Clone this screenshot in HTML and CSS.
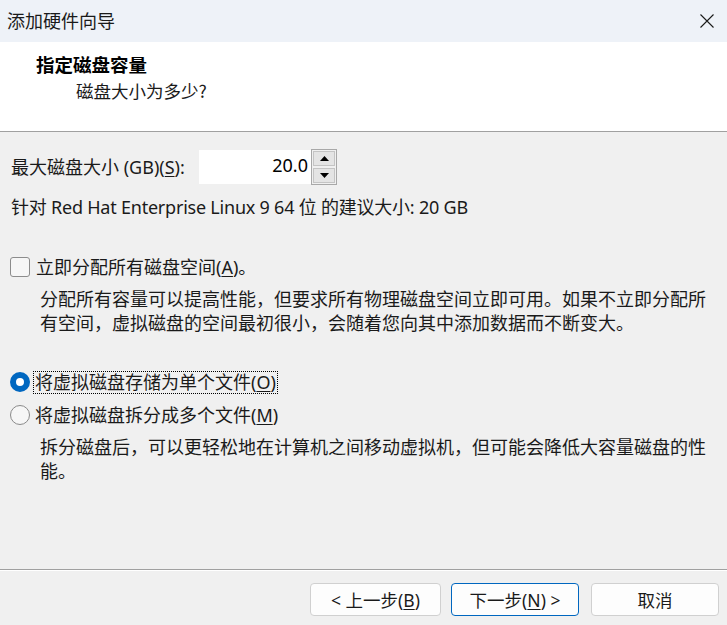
FILE: index.html
```html
<!DOCTYPE html>
<html lang="zh-CN">
<head>
<meta charset="utf-8">
<title>添加硬件向导</title>
<link rel="stylesheet" href="styles.css">
</head>
<body>
<div class="window">
  <div class="titlebar">
    <span class="title">添加硬件向导</span>
    <svg class="close" width="14" height="14" viewBox="0 0 14 14"><path d="M0.5 0.5 L13.5 13.5 M13.5 0.5 L0.5 13.5" stroke="#1a1a1a" stroke-width="1.1" fill="none"/></svg>
  </div>
  <div class="header">
    <div class="h-title">指定磁盘容量</div>
    <div class="h-sub">磁盘大小为多少?</div>
  </div>
  <div class="content">
    <div class="size-row">
      <span class="lbl">最大磁盘大小 (GB)(<u>S</u>):</span>
      <div class="spin">
        <div class="spin-input">20.0</div>
        <div class="spin-btns">
          <div class="spin-btn"><svg width="9" height="5" viewBox="0 0 9 5"><path d="M4.5 0 L9 5 L0 5 Z" fill="#000"/></svg></div>
          <div class="spin-btn"><svg width="9" height="5" viewBox="0 0 9 5"><path d="M0 0 L9 0 L4.5 5 Z" fill="#000"/></svg></div>
        </div>
      </div>
    </div>
    <div class="recommend">针对 Red Hat Enterprise Linux 9 64 位 的建议大小: 20 GB</div>

    <div class="option check-opt">
      <span class="checkbox"></span>
      <span class="opt-label">立即分配所有磁盘空间(<u>A</u>)。</span>
    </div>
    <p class="desc">分配所有容量可以提高性能，但要求所有物理磁盘空间立即可用。如果不立即分配所有空间，虚拟磁盘的空间最初很小，会随着您向其中添加数据而不断变大。</p>

    <div class="option radio-opt first">
      <span class="radio checked"></span>
      <span class="opt-label focus">将虚拟磁盘存储为单个文件(<u>O</u>)</span>
    </div>
    <div class="option radio-opt second">
      <span class="radio"></span>
      <span class="opt-label">将虚拟磁盘拆分成多个文件(<u>M</u>)</span>
    </div>
    <p class="desc">拆分磁盘后，可以更轻松地在计算机之间移动虚拟机，但可能会降低大容量磁盘的性能。</p>
  </div>
  <div class="footer">
    <button class="btn">&lt; 上一步(<u>B</u>)</button>
    <button class="btn default">下一步(<u>N</u>) &gt;</button>
    <button class="btn">取消</button>
  </div>
</div>
</body>
</html>
```

FILE: styles.css
```css
* { box-sizing: border-box; }
html, body { margin: 0; padding: 0; }
body {
  width: 727px;
  height: 625px;
  overflow: hidden;
  font-family: "Noto Sans", "Noto Sans CJK SC", sans-serif;
  font-size: 18px;
  color: #1a1a1a;
  background: #f0f0f0;
}
.window {
  display: flex;
  flex-direction: column;
  height: 625px;
}
.titlebar {
  height: 42px;
  flex: none;
  background: #eef2f8;
  display: flex;
  align-items: center;
  justify-content: space-between;
  padding: 0 13px 0 7px;
}
.title { font-size: 18px; line-height: 24px; color: #1a1a1a; }
.close { display: block; }

.header {
  height: 90px;
  flex: none;
  background: #fff;
  border-bottom: 1px solid #a0a0a0;
  padding-top: 10px;
}
.h-title {
  font-family: "Noto Sans CJK SC", sans-serif;
  font-weight: 700;
  font-size: 18.5px;
  line-height: 24px;
  padding-left: 36px;
  color: #000;
}
.h-sub {
  font-family: "Noto Sans CJK SC", sans-serif;
  font-size: 17.5px;
  line-height: 24px;
  padding-left: 76px;
  margin-top: 3px;
  color: #1a1a1a;
}

.content {
  flex: 1;
  padding: 17px 0 0 11px;
  line-height: 24px;
}
.size-row {
  display: flex;
  align-items: center;
  height: 36px;
}
.lbl { width: 188px; flex: none; }
.spin { display: flex; align-items: stretch; height: 36px; }
.spin-input {
  width: 112px;
  margin: 1px 0;
  background: #fff;
  text-align: right;
  padding-right: 3px;
  line-height: 31px;
  color: #000;
}
.spin-btns {
  width: 26px;
  border: 1px solid #a8a8a8;
  display: flex;
  flex-direction: column;
  background: #f0f0f0;
}
.spin-btn {
  flex: 1;
  margin: 1px;
  border: 1px solid #c4c4c4;
  background: #e4e4e4;
  display: flex;
  align-items: center;
  justify-content: center;
}
.spin-btn svg { display: block; }

.recommend { margin-top: 10px; letter-spacing: -0.22px; }

.option {
  display: flex;
  align-items: center;
  height: 24px;
}
.check-opt { margin-top: 36px; }
.checkbox {
  width: 20px;
  height: 20px;
  margin-left: -1px;
  border: 1px solid #8c8c8c;
  border-radius: 3px;
  background: #f6f6f6;
  flex: none;
}
.check-opt .opt-label { margin-left: 6px; }

.desc {
  margin: 8px 0 0 29px;
  width: 680px;
  line-height: 24px;
}

.radio-opt.first { margin-top: 35px; }
.radio-opt.second { margin-top: 9px; }
.radio {
  width: 20px;
  height: 20px;
  margin-left: -1px;
  border-radius: 50%;
  border: 1px solid #8a8a8a;
  background: #f6f6f6;
  flex: none;
}
.radio.checked {
  border: 6px solid #0067c0;
  background: #fff;
}
.radio-opt .opt-label { margin-left: 5px; }
.opt-label.focus {
  outline: 1px dotted #000;
  outline-offset: 0;
  padding: 0 1px;
  margin-left: 4px;
  line-height: 21px;
}

.footer {
  flex: none;
  height: 56px;
  border-top: 1px solid #a0a0a0;
  box-shadow: inset 0 1px 0 #fff;
  display: flex;
  justify-content: flex-end;
  align-items: flex-start;
  padding: 13px 8px 0 0;
  gap: 10px;
}
.btn {
  font-family: "Noto Sans", "Noto Sans CJK SC", sans-serif;
  font-size: 17.5px;
  color: #1a1a1a;
  height: 33px;
  width: 128px;
  border: 1px solid #d0d0d0;
  border-radius: 4px;
  background: #fdfdfd;
  padding: 0;
  line-height: 30px;
}
.btn:first-child { width: 131px; }
.btn.default { border-color: #0067c0; margin-right: 2px; }
u { text-decoration-thickness: 1px; text-underline-offset: 2px; }
```
